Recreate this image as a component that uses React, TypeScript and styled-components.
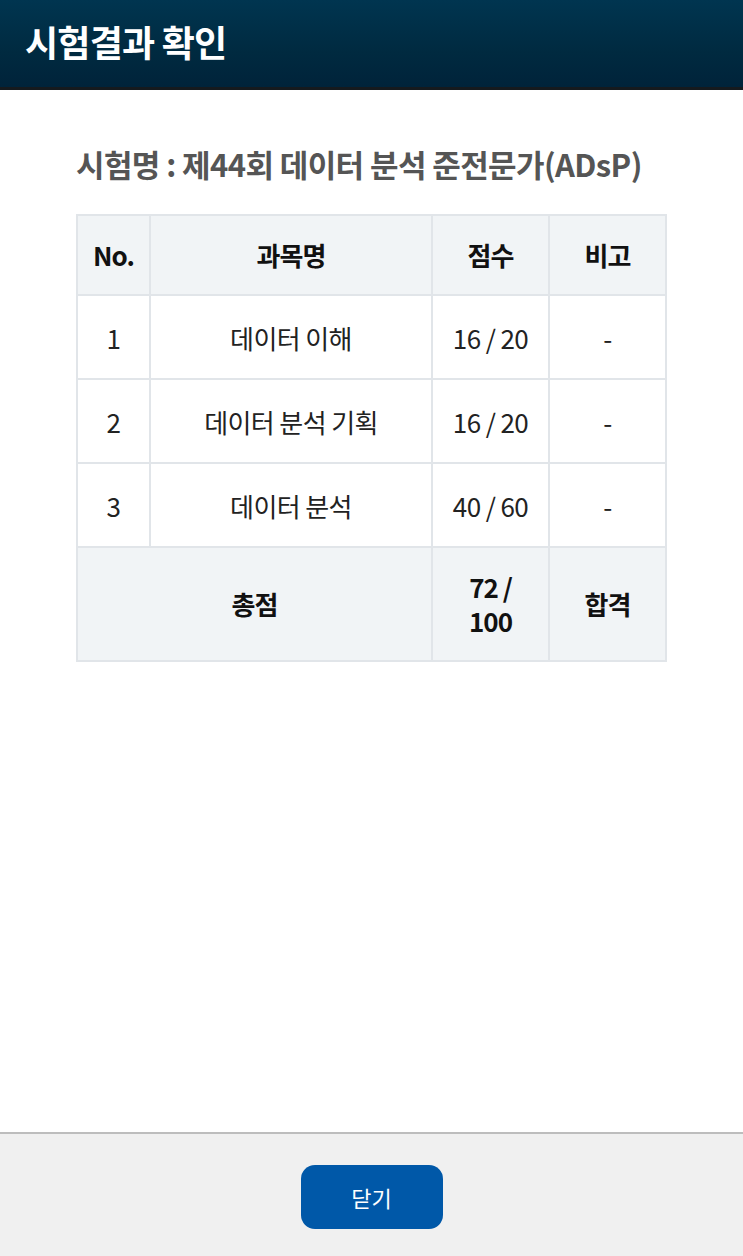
import styled, { createGlobalStyle } from "styled-components";

const GlobalStyle = createGlobalStyle`
  html, body {
    margin: 0;
    padding: 0;
    background: #ffffff;
    font-family: "Noto Sans CJK KR", "Noto Sans", sans-serif;
  }
  #root {
    min-height: 100vh;
  }
`;

const rows = [
  { no: 1, name: "데이터 이해", score: "16 / 20", note: "-" },
  { no: 2, name: "데이터 분석 기획", score: "16 / 20", note: "-" },
  { no: 3, name: "데이터 분석", score: "40 / 60", note: "-" },
];

const App = () => {
  return (
    <>
      <GlobalStyle />
      <Page>
        <Header>
          <HeaderTitle>시험결과 확인</HeaderTitle>
        </Header>
        <Content>
          <ExamName>시험명 : 제44회 데이터 분석 준전문가(ADsP)</ExamName>
          <Table>
            <colgroup>
              <col style={{ width: 73 }} />
              <col style={{ width: 282 }} />
              <col style={{ width: 117 }} />
              <col />
            </colgroup>
            <thead>
              <HeadRow>
                <HeadCell>No.</HeadCell>
                <HeadCell>과목명</HeadCell>
                <HeadCell>점수</HeadCell>
                <HeadCell>비고</HeadCell>
              </HeadRow>
            </thead>
            <tbody>
              {rows.map((row) => (
                <tr key={row.no}>
                  <Cell>{row.no}</Cell>
                  <Cell>{row.name}</Cell>
                  <Cell>{row.score}</Cell>
                  <Cell>{row.note}</Cell>
                </tr>
              ))}
              <TotalRow>
                <HeadCell colSpan={2}>총점</HeadCell>
                <HeadCell>
                  72 /
                  <br />
                  100
                </HeadCell>
                <HeadCell>합격</HeadCell>
              </TotalRow>
            </tbody>
          </Table>
        </Content>
        <Footer>
          <CloseButton>닫기</CloseButton>
        </Footer>
      </Page>
    </>
  );
};

const Page = styled.div`
  display: flex;
  flex-direction: column;
  min-height: 1256px;
`;

const Header = styled.header`
  height: 87px;
  background: linear-gradient(to bottom, #003550 0%, #002a40 60%, #00233a 100%);
  border-bottom: 3px solid #151a1e;
  display: flex;
  align-items: center;
  padding-left: 25px;
  box-sizing: content-box;
`;

const HeaderTitle = styled.h1`
  margin: 0 0 6px;
  color: #ffffff;
  font-size: 36px;
  font-weight: 700;
  letter-spacing: -0.8px;
`;

const Content = styled.main`
  flex: 1;
  padding: 52px 76px 0 76px;
`;

const ExamName = styled.h2`
  margin: 0 0 28px;
  color: #555555;
  font-size: 31px;
  font-weight: 700;
  letter-spacing: -0.6px;
  line-height: 44px;
  white-space: nowrap;
`;

const Table = styled.table`
  width: 591px;
  border-collapse: collapse;
  table-layout: fixed;
  border: 2px solid #e1e5e9;
`;

const Cell = styled.td`
  height: 82px;
  padding: 0;
  border: 2px solid #e1e5e9;
  text-align: center;
  vertical-align: middle;
  font-size: 26px;
  font-weight: 400;
  letter-spacing: -0.6px;
  color: #222222;
`;

const HeadCell = styled(Cell).attrs({ as: "th" })`
  background: #f1f4f6;
  font-weight: 700;
  color: #111111;
  line-height: 34px;
  letter-spacing: -1px;
`;

const HeadRow = styled.tr`
  & > th {
    height: 78px;
  }
`;

const TotalRow = styled.tr`
  & > th {
    height: 112px;
  }
`;

const Footer = styled.footer`
  height: 122px;
  background: #f0f0f0;
  border-top: 2px solid #bdbdbd;
  display: flex;
  justify-content: center;
  align-items: center;
`;

const CloseButton = styled.button`
  width: 142px;
  height: 64px;
  margin-top: 4px;
  border: none;
  border-radius: 14px;
  background: #0058a8;
  color: #ffffff;
  font-family: "Noto Sans CJK KR", "Noto Sans", sans-serif;
  font-size: 22px;
  font-weight: 400;
`;

export default App;
